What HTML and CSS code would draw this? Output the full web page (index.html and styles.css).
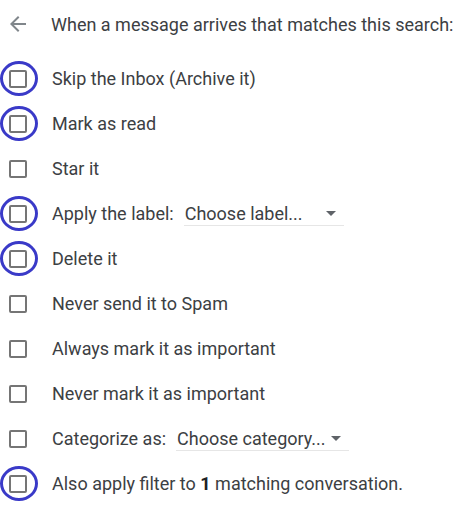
FILE: index.html
```html
<!DOCTYPE html>
<html>
<head>
<meta charset="utf-8">
<link rel="stylesheet" href="styles.css">
</head>
<body>
<div class="panel">
  <div class="header">
    <svg class="back" viewBox="0 0 24 24" width="24" height="24"><path d="M20 11H7.83l5.59-5.59L12 4l-8 8 8 8 1.41-1.41L7.83 13H20v-2z" fill="#80868b"/></svg>
    <span class="title">When a message arrives that matches this search:</span>
  </div>
  <div class="rows">
    <div class="row marked"><span class="box"></span><span class="label">Skip the Inbox (Archive it)</span></div>
    <div class="row marked"><span class="box"></span><span class="label">Mark as read</span></div>
    <div class="row"><span class="box"></span><span class="label">Star it</span></div>
    <div class="row marked"><span class="box"></span><span class="label">Apply the label:</span><span class="select sel-label"><span class="sel-text">Choose label...</span><span class="caret"></span></span></div>
    <div class="row marked"><span class="box"></span><span class="label">Delete it</span></div>
    <div class="row"><span class="box"></span><span class="label">Never send it to Spam</span></div>
    <div class="row"><span class="box"></span><span class="label">Always mark it as important</span></div>
    <div class="row"><span class="box"></span><span class="label">Never mark it as important</span></div>
    <div class="row"><span class="box"></span><span class="label">Categorize as:</span><span class="select sel-cat"><span class="sel-text">Choose category...</span><span class="caret"></span></span></div>
    <div class="row marked"><span class="box"></span><span class="label">Also apply filter to <b>1</b> matching conversation.</span></div>
  </div>
</div>
</body>
</html>
```
FILE: styles.css
```css
html, body {
  margin: 0;
  padding: 0;
  background: #ffffff;
}
body {
  font-family: Roboto, "Noto Sans", Arial, sans-serif;
  font-size: 18px;
  color: #3c4043;
}
.panel {
  width: 466px;
  height: 507px;
  overflow: hidden;
}
.header {
  display: flex;
  align-items: center;
  height: 48px;
}
.back {
  margin-left: 6px;
  flex: none;
}
.title {
  margin-left: 21px;
  white-space: nowrap;
}
.rows {
  display: flex;
  flex-direction: column;
  margin-top: 8px;
}
.row {
  position: relative;
  display: flex;
  align-items: center;
  height: 45px;
  white-space: nowrap;
}
.box {
  flex: none;
  box-sizing: border-box;
  width: 18px;
  height: 18px;
  margin-left: 9px;
  border: 2px solid #757575;
  border-radius: 2px;
}
.label {
  margin-left: 25px;
}
.label b {
  font-weight: 700;
  color: #202124;
}
.marked::before {
  content: "";
  position: absolute;
  left: 0;
  top: 5px;
  width: 38px;
  height: 35px;
  box-sizing: border-box;
  border: 3px solid #3a3ac8;
  border-radius: 50%;
}
.select {
  display: flex;
  align-items: center;
  height: 24px;
  border-bottom: 1px solid #e6e6e6;
}
.sel-label {
  margin-left: 10px;
  width: 160px;
}
.sel-cat {
  margin-left: 10px;
  width: 173px;
}
.sel-text {
  margin-left: 1px;
}
.caret {
  margin-left: auto;
  margin-right: 8px;
  width: 0;
  height: 0;
  border-left: 5px solid transparent;
  border-right: 5px solid transparent;
  border-top: 5px solid #5f6368;
}
```
